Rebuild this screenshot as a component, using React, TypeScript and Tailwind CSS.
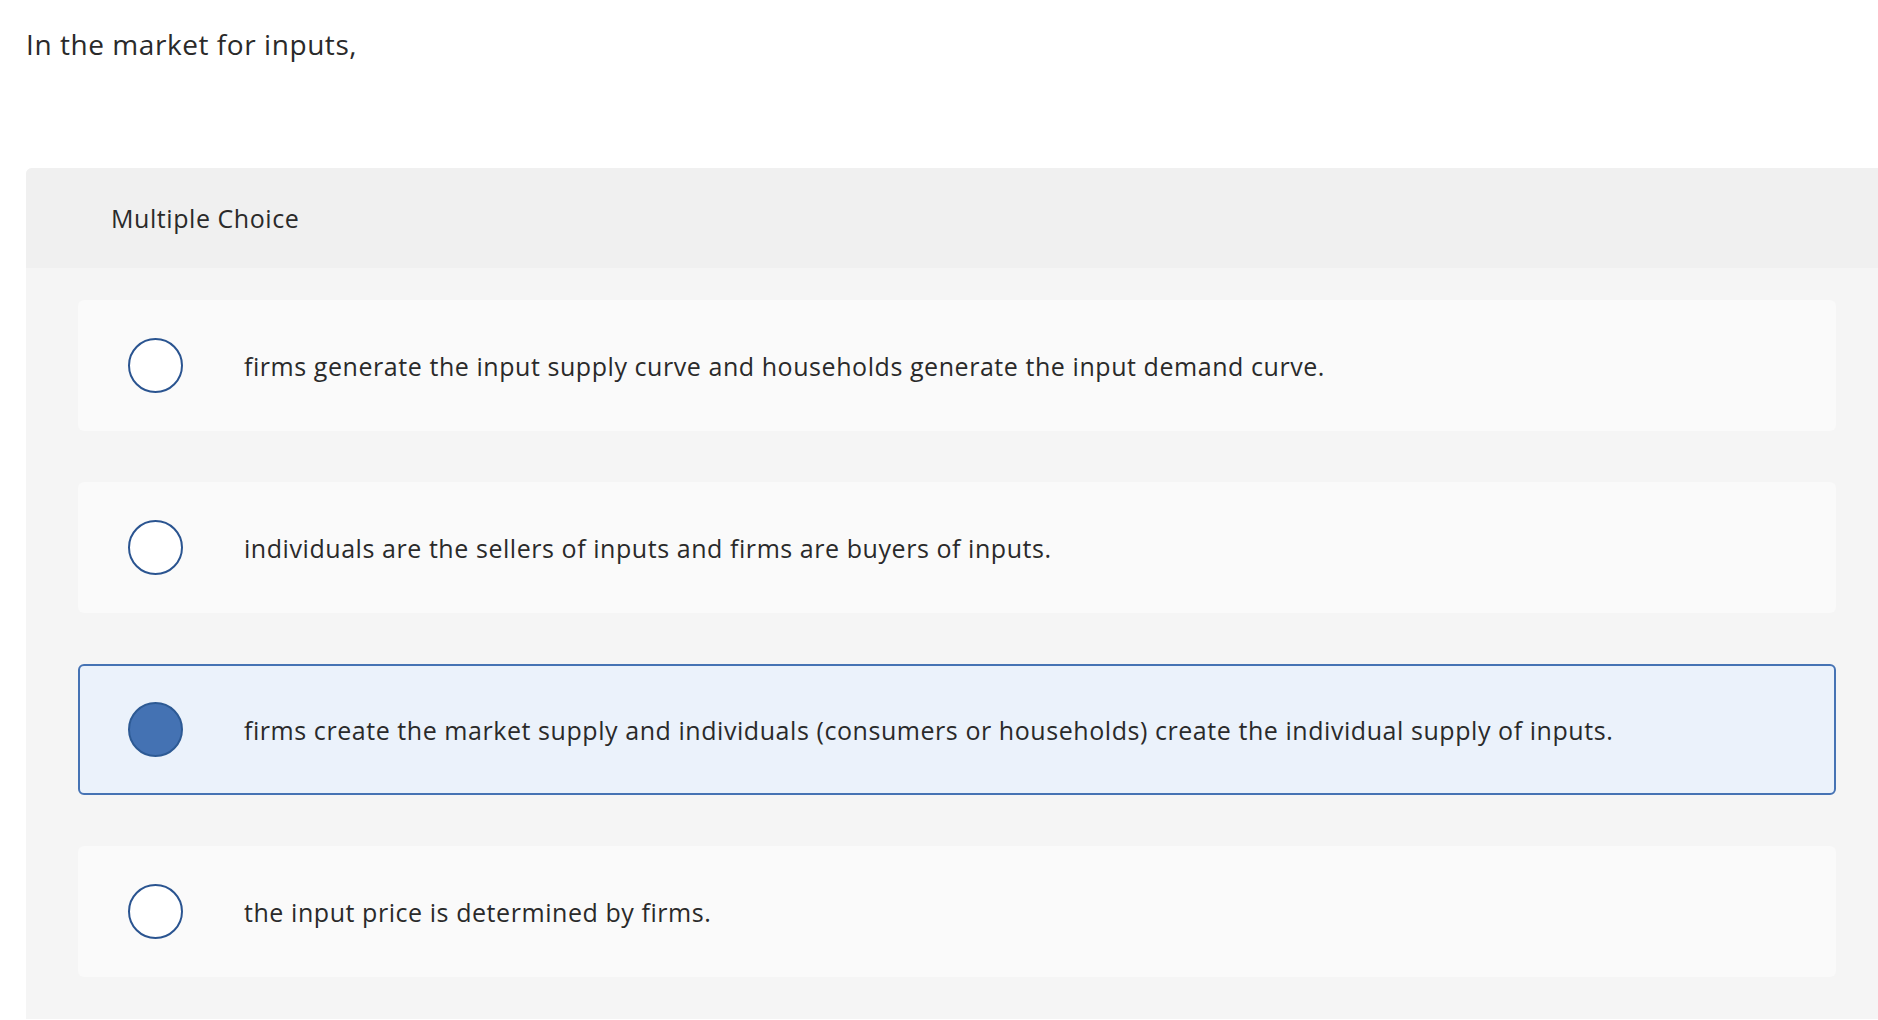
const OPTIONS = [
  "firms generate the input supply curve and households generate the input demand curve.",
  "individuals are the sellers of inputs and firms are buyers of inputs.",
  "firms create the market supply and individuals (consumers or households) create the individual supply of inputs.",
  "the input price is determined by firms.",
];

const SELECTED = 2;

function Radio({ checked }: { checked: boolean }) {
  return (
    <span
      className={
        checked
          ? "block h-[55px] w-[55px] shrink-0 rounded-full border-2 border-[#2d5a94] bg-[#4472b3]"
          : "block h-[55px] w-[55px] shrink-0 rounded-full border-2 border-[#2a5490] bg-white"
      }
    />
  );
}

export default function App() {
  return (
    <div className="min-h-screen bg-white font-['Open_Sans',_'Liberation_Sans',_sans-serif] tracking-[0.035em] text-[#2a2a2a]">
      <div className="pl-[26px] pt-[24px] text-[28px] leading-[40px]">
        In the market for inputs,
      </div>

      <div className="ml-[26px] mt-[104px] rounded-tl-[6px] bg-[#f5f5f5]">
        <div className="flex h-[100px] items-center rounded-tl-[6px] bg-[#f0f0f0] pl-[85px] pt-[2px] text-[25px]">
          Multiple Choice
        </div>
        <div className="flex flex-col gap-[51px] pb-[42px] pl-[52px] pr-[42px] pt-[32px]">
          {OPTIONS.map((text, i) => {
            const checked = i === SELECTED;
            return (
              <label
                key={i}
                className={
                  checked
                    ? "flex h-[131px] items-center rounded-[6px] border-2 border-[#4673b4] bg-[#ebf2fb] pl-[48px]"
                    : "flex h-[131px] items-center rounded-[6px] bg-[#fafafa] pl-[50px]"
                }
              >
                <Radio checked={checked} />
                <span className="ml-[61px] pt-[2px] text-[25px]">{text}</span>
              </label>
            );
          })}
        </div>
      </div>
    </div>
  );
}
